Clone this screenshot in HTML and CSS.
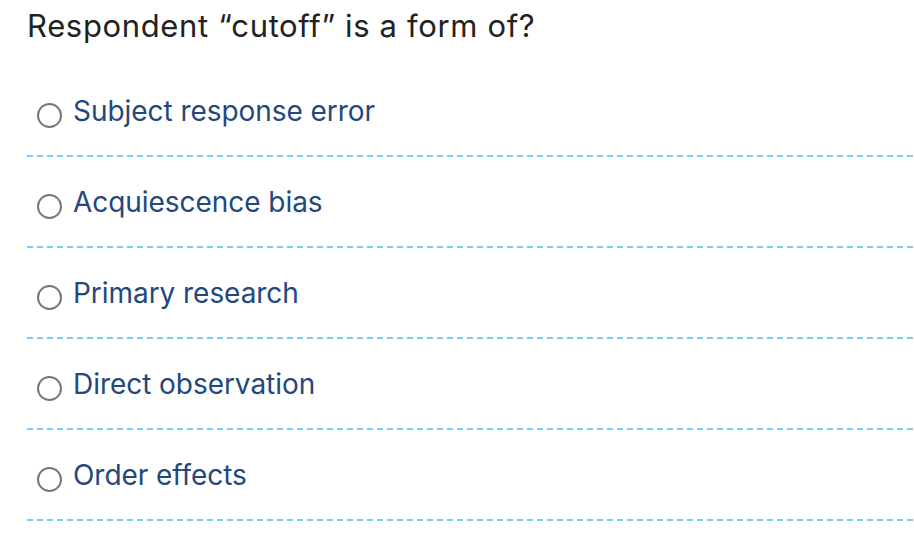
FILE: index.html
```html
<!DOCTYPE html>
<html lang="en">
<head>
<meta charset="utf-8">
<title>Quiz</title>
<link rel="stylesheet" href="styles.css">
</head>
<body>
<div class="quiz">
  <h1 class="question">Respondent “cutoff” is a form of?</h1>
  <ul class="options">
    <li class="option"><span class="radio"></span><span class="label">Subject response error</span></li>
    <li class="option"><span class="radio"></span><span class="label">Acquiescence bias</span></li>
    <li class="option"><span class="radio"></span><span class="label">Primary research</span></li>
    <li class="option"><span class="radio"></span><span class="label">Direct observation</span></li>
    <li class="option"><span class="radio"></span><span class="label">Order effects</span></li>
  </ul>
</div>
</body>
</html>
```

FILE: styles.css
```css
html, body {
  margin: 0;
  padding: 0;
  background: #ffffff;
}

.quiz {
  padding-left: 27px;
  font-family: Inter, "Noto Sans", sans-serif;
}

.question {
  margin: 0;
  height: 66px;
  padding-top: 8px;
  box-sizing: border-box;
  font-size: 31px;
  line-height: 35px;
  font-weight: 400;
  letter-spacing: 0.65px;
  color: #222222;
}

.options {
  list-style: none;
  margin: 0;
  padding: 0;
}

.option {
  display: flex;
  align-items: center;
  height: 89px;
  background-image: repeating-linear-gradient(to right, #74cdf7 0 6px, transparent 6px 10px);
  background-size: 100% 2px;
  background-repeat: no-repeat;
  background-position: left bottom;
  padding-bottom: 2px;
}

.radio {
  flex: none;
  width: 21px;
  height: 21px;
  border: 2px solid #777777;
  border-radius: 50%;
  margin-left: 10px;
  margin-right: 11px;
  margin-top: 9px;
}

.label {
  font-size: 28px;
  line-height: 32px;
  letter-spacing: -0.05px;
  color: #23487a;
}
```
